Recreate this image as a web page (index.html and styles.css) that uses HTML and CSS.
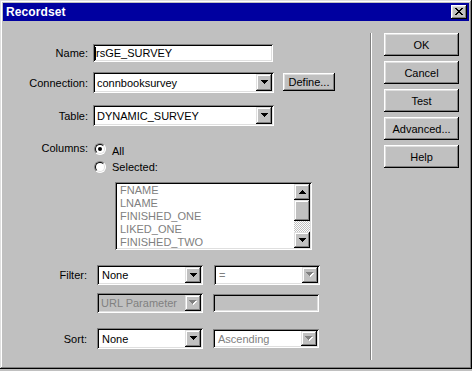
FILE: index.html
```html
<!DOCTYPE html>
<html>
<head>
<meta charset="utf-8">
<link rel="stylesheet" href="styles.css">
</head>
<body>
<div class="window">
  <div class="titlebar">
    <span class="title">Recordset</span>
    <span class="close"><svg width="8" height="7" viewBox="0 0 8 7"><path fill="#000" d="M0 0h2v1H0zM6 0h2v1H6zM1 1h2v1H1zM5 1h2v1H5zM2 2h4v1H2zM3 3h2v1H3zM2 4h4v1H2zM1 5h2v1H1zM5 5h2v1H5zM0 6h2v1H0zM6 6h2v1H6z"/></svg></span>
  </div>
  <div class="client">
    <div class="form">
      <div class="row row-name">
        <span class="lbl">Name:</span>
        <div class="edit w-name"><span class="caret"></span>rsGE_SURVEY</div>
      </div>
      <div class="row row-conn">
        <span class="lbl">Connection:</span>
        <div class="combo w-main"><span class="val">connbooksurvey</span><span class="arrow"><svg width="7" height="4" viewBox="0 0 7 4"><path fill="#000" d="M0 0h7v1H0zM1 1h5v1H1zM2 2h3v1H2zM3 3h1v1H3z"/></svg></span></div>
        <div class="btn btn-define">Define...</div>
      </div>
      <div class="row row-table">
        <span class="lbl">Table:</span>
        <div class="combo w-main"><span class="val">DYNAMIC_SURVEY</span><span class="arrow"><svg width="7" height="4" viewBox="0 0 7 4"><path fill="#000" d="M0 0h7v1H0zM1 1h5v1H1zM2 2h3v1H2zM3 3h1v1H3z"/></svg></span></div>
      </div>
      <div class="row row-all">
        <span class="lbl lbl-cols">Columns:</span>
        <span class="radio on"></span>
        <span class="opt opt-all">All</span>
      </div>
      <div class="row row-sel">
        <span class="lbl"></span>
        <span class="radio"></span>
        <span class="opt">Selected:</span>
      </div>
      <div class="list">
        <div class="items">
          <div class="item">FNAME</div>
          <div class="item">LNAME</div>
          <div class="item">FINISHED_ONE</div>
          <div class="item">LIKED_ONE</div>
          <div class="item">FINISHED_TWO</div>
        </div>
        <div class="vscroll">
          <span class="sbtn"><svg width="7" height="4" viewBox="0 0 7 4"><path fill="#000" d="M3 0h1v1H3zM2 1h3v1H2zM1 2h5v1H1zM0 3h7v1H0z"/></svg></span>
          <span class="thumb"></span>
          <span class="track"></span>
          <span class="sbtn"><svg width="7" height="4" viewBox="0 0 7 4"><path fill="#000" d="M0 0h7v1H0zM1 1h5v1H1zM2 2h3v1H2zM3 3h1v1H3z"/></svg></span>
        </div>
      </div>
      <div class="row row-filter">
        <span class="lbl lbl-low">Filter:</span>
        <div class="combo w-small c-left"><span class="val">None</span><span class="arrow"><svg width="7" height="4" viewBox="0 0 7 4"><path fill="#000" d="M0 0h7v1H0zM1 1h5v1H1zM2 2h3v1H2zM3 3h1v1H3z"/></svg></span></div>
        <div class="combo w-small c-op dis-text"><span class="val">=</span><span class="arrow"><svg width="8" height="5" viewBox="0 0 8 5"><path fill="#fff" d="M1 1h7v1H1zM2 2h5v1H2zM3 3h3v1H3zM4 4h1v1H4z"/><path fill="#808080" d="M0 0h7v1H0zM1 1h5v1H1zM2 2h3v1H2zM3 3h1v1H3z"/></svg></span></div>
      </div>
      <div class="row row-url">
        <span class="lbl lbl-low"></span>
        <div class="combo w-small c-left disabled"><span class="val">URL Parameter</span><span class="arrow"><svg width="8" height="5" viewBox="0 0 8 5"><path fill="#fff" d="M1 1h7v1H1zM2 2h5v1H2zM3 3h3v1H3zM4 4h1v1H4z"/><path fill="#808080" d="M0 0h7v1H0zM1 1h5v1H1zM2 2h3v1H2zM3 3h1v1H3z"/></svg></span></div>
        <div class="edit edit-dis w-small c-right"></div>
      </div>
      <div class="row row-sort">
        <span class="lbl lbl-low">Sort:</span>
        <div class="combo w-small c-left"><span class="val">None</span><span class="arrow"><svg width="7" height="4" viewBox="0 0 7 4"><path fill="#000" d="M0 0h7v1H0zM1 1h5v1H1zM2 2h3v1H2zM3 3h1v1H3z"/></svg></span></div>
        <div class="combo w-small c-right c-asc dis-text"><span class="val">Ascending</span><span class="arrow"><svg width="8" height="5" viewBox="0 0 8 5"><path fill="#fff" d="M1 1h7v1H1zM2 2h5v1H2zM3 3h3v1H3zM4 4h1v1H4z"/><path fill="#808080" d="M0 0h7v1H0zM1 1h5v1H1zM2 2h3v1H2zM3 3h1v1H3z"/></svg></span></div>
      </div>
    </div>
    <div class="sep"></div>
    <div class="buttons">
      <div class="btn btn-main">OK</div>
      <div class="btn btn-main">Cancel</div>
      <div class="btn btn-main">Test</div>
      <div class="btn btn-main">Advanced...</div>
      <div class="btn btn-main">Help</div>
    </div>
  </div>
</div>
</body>
</html>
```
FILE: styles.css
```css
* { box-sizing: border-box; }

body {
  margin: 0;
  background: #c0c0c0;
  font-family: "Liberation Sans", Arial, sans-serif;
  font-size: 11px;
  color: #000;
}

.window {
  width: 472px;
  height: 369px;
  padding: 3px;
  background: #c0c0c0;
  box-shadow: inset -1px -1px #000, inset 1px 1px #dfdfdf, inset -2px -2px #808080, inset 2px 2px #fff;
  display: flex;
  flex-direction: column;
}

.titlebar {
  height: 18px;
  flex: none;
  background: #0000a0;
  color: #fff;
  display: flex;
  align-items: center;
  justify-content: space-between;
  padding: 0 2px 0 3px;
}

.title {
  font-weight: bold;
  font-size: 12px;
  letter-spacing: 0.1px;
}

.close {
  width: 16px;
  height: 14px;
  background: #c0c0c0;
  box-shadow: inset -1px -1px #000, inset 1px 1px #fff, inset -2px -2px #808080, inset 2px 2px #dfdfdf;
  display: flex;
  align-items: center;
  justify-content: center;
  padding: 0 1px 1px 0;
}

.close svg, .arrow svg, .sbtn svg { display: block; }

.client {
  flex: 1;
  display: flex;
}

.form {
  width: 367px;
  flex: none;
}

.sep {
  width: 2px;
  margin: 12px 0 6px;
  border-left: 1px solid #808080;
  border-right: 1px solid #fff;
}

.buttons {
  padding: 12px 0 0 12px;
  display: flex;
  flex-direction: column;
  gap: 5px;
}

.btn {
  background: #c0c0c0;
  box-shadow: inset -1px -1px #000, inset 1px 1px #fff, inset -2px -2px #808080, inset 2px 2px #dfdfdf;
  display: flex;
  align-items: center;
  justify-content: center;
  white-space: nowrap;
}

.btn-main {
  width: 75px;
  height: 23px;
}

.btn-define {
  width: 52px;
  height: 18px;
  margin-left: 9px;
  align-self: flex-start;
  margin-top: 1px;
}

.row {
  display: flex;
  align-items: center;
}

.lbl {
  width: 85px;
  flex: none;
  text-align: right;
  white-space: nowrap;
}

.lbl-low { width: 84px; }

.row-name { margin-top: 23px; height: 18px; }
.row-conn { margin-top: 10px; height: 21px; }
.row-table { margin-top: 12px; height: 21px; }
.row-all { margin-top: 16px; height: 13px; }
.row-sel { margin-top: 5px; height: 13px; }
.row-filter { margin-top: 15px; height: 20px; }
.row-url { margin-top: 8px; height: 20px; }
.row-sort { margin-top: 15px; height: 21px; }

.edit {
  height: 100%;
  margin-left: 5px;
  background: #fff;
  box-shadow: inset 1px 1px #808080, inset -1px -1px #fff, inset 2px 2px #000, inset -2px -2px #dfdfdf;
  padding: 0 2px;
  display: flex;
  align-items: center;
  white-space: nowrap;
}

.w-name { width: 180px; }

.caret {
  width: 1px;
  height: 13px;
  background: #000;
}

.combo {
  height: 100%;
  margin-left: 5px;
  background: #fff;
  box-shadow: inset 1px 1px #808080, inset -1px -1px #fff, inset 2px 2px #000, inset -2px -2px #dfdfdf;
  padding: 2px;
  display: flex;
  align-items: stretch;
}

.combo .val {
  flex: 1;
  padding-left: 2px;
  display: flex;
  align-items: center;
  white-space: nowrap;
  overflow: hidden;
}

.arrow {
  width: 16px;
  flex: none;
  background: #c0c0c0;
  box-shadow: inset -1px -1px #000, inset 1px 1px #dfdfdf, inset -2px -2px #808080, inset 2px 2px #fff;
  display: flex;
  align-items: center;
  justify-content: center;
  padding-bottom: 1px;
}

.w-main { width: 181px; }
.w-small { width: 106px; }

.c-left { margin-left: 10px; }
.c-op { margin-left: 11px; }
.c-right { margin-left: 10px; }

.row-filter .combo .val,
.row-sort .combo .val { padding-left: 3px; }

.dis-text .val { color: #808080; }

.disabled { background: #c0c0c0; }
.disabled .val { color: #808080; }

.edit-dis {
  background: #c0c0c0;
  height: 18px;
}

.c-asc { height: 19px; }

.radio {
  width: 12px;
  height: 12px;
  flex: none;
  margin-left: 6px;
  border-radius: 50%;
  border: 1px solid;
  border-color: #808080 #fff #fff #808080;
  background: #fff;
  position: relative;
}

.radio::before {
  content: "";
  position: absolute;
  inset: 0;
  border-radius: 50%;
  border: 1px solid;
  border-color: #000 #dfdfdf #dfdfdf #000;
}

.radio.on::after {
  content: "";
  position: absolute;
  left: 3px;
  top: 3px;
  width: 4px;
  height: 4px;
  border-radius: 50%;
  background: #000;
}

.opt {
  margin-left: 6px;
  white-space: nowrap;
}

.opt-all { padding-top: 4px; }
.lbl-cols { padding-bottom: 1px; }

.list {
  margin: 9px 0 0 112px;
  width: 197px;
  height: 68px;
  background: #fff;
  box-shadow: inset 1px 1px #808080, inset -1px -1px #fff, inset 2px 2px #000, inset -2px -2px #dfdfdf;
  padding: 2px;
  display: flex;
}

.items {
  flex: 1;
  overflow: hidden;
  padding-left: 3px;
  color: #808080;
}

.item {
  height: 13px;
  line-height: 13px;
  white-space: nowrap;
}

.vscroll {
  width: 16px;
  flex: none;
  display: flex;
  flex-direction: column;
}

.sbtn {
  height: 16px;
  flex: none;
  background: #c0c0c0;
  box-shadow: inset -1px -1px #000, inset 1px 1px #dfdfdf, inset -2px -2px #808080, inset 2px 2px #fff;
  display: flex;
  align-items: center;
  justify-content: center;
}

.thumb {
  height: 21px;
  flex: none;
  background: #c0c0c0;
  box-shadow: inset -1px -1px #000, inset 1px 1px #dfdfdf, inset -2px -2px #808080, inset 2px 2px #fff;
}

.track {
  flex: 1;
  background: repeating-conic-gradient(#c0c0c0 0 25%, #fff 0 50%) 0 0 / 2px 2px;
}
```
